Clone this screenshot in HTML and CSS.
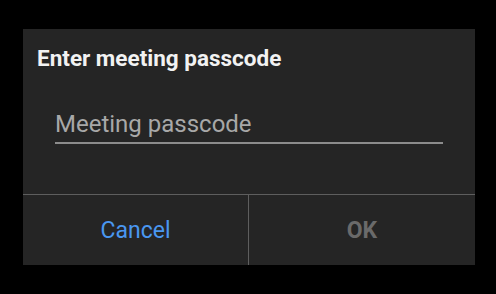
FILE: index.html
```html
<!DOCTYPE html>
<html lang="en">
<head>
  <meta charset="UTF-8">
  <meta name="viewport" content="width=device-width, initial-scale=1.0">
  <title>Enter meeting passcode</title>
  <link rel="stylesheet" href="styles.css">
</head>
<body>
  <!-- Passcode dialog -->
  <div class="dialog">
    <h2 class="dialog-title">Enter meeting passcode</h2>

    <div class="dialog-body">
      <div class="passcode-field">Meeting passcode</div>
    </div>

    <!-- Buttons -->
    <div class="dialog-actions">
      <button class="dialog-btn btn-cancel">Cancel</button>
      <button class="dialog-btn btn-ok">OK</button>
    </div>
  </div>
</body>
</html>
```

FILE: styles.css
```css
body {
  margin: 0;
  padding: 29px 21px 0 23px;
  background: #000;
  font-family: Roboto, "Liberation Sans", sans-serif;
  height: 294px;
  box-sizing: border-box;
  overflow: hidden;
}

/* Dialog card */
.dialog {
  width: 452px;
  background: #252525;
}

.dialog-title {
  margin: 0;
  padding: 14px 14px 0;
  color: #f2f2f2;
  font-size: 22.5px;
  font-weight: bold;
  line-height: 30px;
}

.dialog-body {
  padding: 37px 32px 50px;
}

.passcode-field {
  color: #a8a8a8;
  font-size: 24px;
  line-height: 28px;
  padding-bottom: 4px;
  border-bottom: 2px solid #8c8c8c;
}

/* Action row */
.dialog-actions {
  display: flex;
  border-top: 1px solid #5e5e5e;
}

.dialog-btn {
  flex: 1;
  height: 70px;
  background: none;
  border: none;
  font-family: inherit;
  font-size: 23px;
  padding: 0;
}

.btn-cancel {
  color: #4a97f0;
  border-right: 1px solid #5e5e5e;
  flex: 0 0 226px;
}

.btn-ok {
  color: #6a6a6a;
  font-weight: bold;
}
```
